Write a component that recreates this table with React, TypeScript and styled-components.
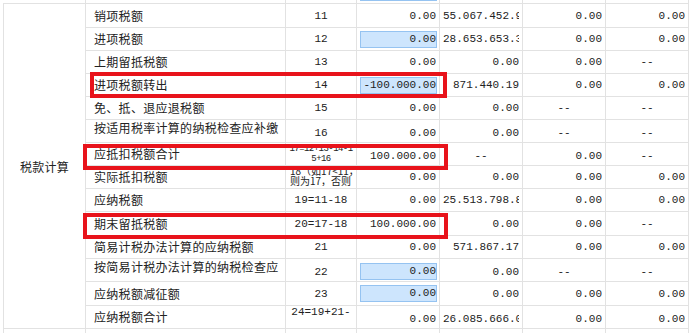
import React from 'react';
import styled, { createGlobalStyle } from 'styled-components';

type Value = string | { box: string };

interface Row {
  label: string;
  no: React.ReactNode;
  vals: Value[];
  wrap?: boolean;
  low?: boolean;
  topNo?: boolean;
}

const GlobalStyle = createGlobalStyle`
  html, body {
    margin: 0;
    padding: 0;
    background: #fff;
  }
  body {
    overflow: hidden;
    color: #222;
    font-family: "Noto Sans CJK SC", "Noto Sans", sans-serif;
  }
`;

const LINE = '#e2e2e2';
const NUM_FONT = '"Liberation Mono", "DejaVu Sans Mono", "Noto Sans CJK SC", monospace';

const Page = styled.div`
  position: relative;
  width: 692px;
  height: 333px;
  overflow: hidden;
`;

const Table = styled.div`
  display: grid;
  grid-template-columns: 83px 200px 71px 83px 83px 83px 83px;
  grid-template-rows: 24px 24px 23px 23px 23px 23px 23px 23px 23px 23px 24px 23px 23px 24px 23px 24px;
  margin: -20px 0 0 3px;
`;

const Cell = styled.div<{ $low?: boolean }>`
  box-sizing: border-box;
  border-right: 1px solid ${LINE};
  border-bottom: 1px solid ${LINE};
  display: flex;
  align-items: center;
  overflow: hidden;
  min-width: 0;
  padding-top: ${(p) => (p.$low ? '3px' : '0')};
`;

const GroupCell = styled(Cell)<{ $span: number; $edge?: boolean }>`
  grid-row: span ${(p) => p.$span};
  border-left: ${(p) => (p.$edge ? `1px solid ${LINE}` : 'none')};
  justify-content: center;
  font-size: 12px;
  letter-spacing: 0.3px;
`;

const LabelCell = styled(Cell)<{ $wrap?: boolean }>`
  align-items: ${(p) => (p.$wrap ? 'flex-start' : 'center')};
  padding: 0 4px 0 8px;
  font-size: 12px;
  letter-spacing: 0.3px;
`;

const LabelText = styled.div<{ $wrap?: boolean }>`
  line-height: ${(p) => (p.$wrap ? '15px' : '16px')};
  max-height: ${(p) => (p.$wrap ? '15px' : 'none')};
  overflow: hidden;
`;

const NoCell = styled(Cell)<{ $top?: boolean }>`
  align-items: ${(p) => (p.$top ? 'flex-start' : 'center')};
  justify-content: center;
  font-family: ${NUM_FONT};
  font-size: 11px;
  padding-left: 3px;
  padding-right: 3px;
`;

const ValueCell = styled(Cell)`
  padding-left: 3px;
  padding-right: 3px;
  font-family: ${NUM_FONT};
  font-size: 11px;
`;

const BoxCell = styled(Cell)<{ $tail?: boolean }>`
  padding-left: 3px;
  padding-right: 2px;
  align-items: ${(p) => (p.$tail ? 'flex-end' : 'center')};
  padding-bottom: ${(p) => (p.$tail ? '2px' : '0')};
  font-family: ${NUM_FONT};
  font-size: 11px;
`;

const Num = styled.div<{ $center?: boolean }>`
  flex: 1;
  min-width: 0;
  overflow: hidden;
  white-space: nowrap;
  text-align: ${(p) => (p.$center ? 'center' : 'right')};
`;

const Input = styled.div`
  flex: 1;
  box-sizing: border-box;
  height: 17px;
  line-height: 15px;
  background: #cde5fd;
  border: 1px solid #95c3f1;
  text-align: right;
  white-space: nowrap;
  overflow: hidden;
`;

const SmallFormula = styled.div`
  width: 100%;
  text-align: center;
  font-size: 9px;
  letter-spacing: -0.55px;
  line-height: 10px;
  white-space: nowrap;
`;

const NoteFormula = styled.div`
  width: 100%;
  max-height: 20px;
  font-family: "Noto Sans CJK SC", sans-serif;
  font-size: 10px;
  line-height: 10px;
  white-space: nowrap;
  overflow: hidden;
  text-align: left;
  padding-left: 1px;
`;

const TopFormula = styled.div`
  width: 100%;
  max-height: 12px;
  overflow: hidden;
  text-align: center;
  line-height: 12px;
  white-space: nowrap;
`;

const Mark = styled.div<{ $x: number; $y: number; $w: number; $h: number }>`
  position: absolute;
  left: ${(p) => p.$x}px;
  top: ${(p) => p.$y}px;
  width: ${(p) => p.$w}px;
  height: ${(p) => p.$h}px;
  box-sizing: border-box;
  border: 4px solid #e8131b;
  pointer-events: none;
`;

const rows: Row[] = [
  { label: '销项税额', no: '11', vals: ['0.00', '55.067.452.96', '0.00', '0.00'] },
  { label: '进项税额', no: '12', vals: [{ box: '0.00' }, '28.653.653.31', '0.00', '0.00'] },
  { label: '上期留抵税额', no: '13', vals: ['0.00', '0.00', '0.00', '--'] },
  { label: '进项税额转出', no: '14', vals: [{ box: '-100.000.00' }, '871.440.19', '0.00', '0.00'] },
  { label: '免、抵、退应退税额', no: '15', vals: ['0.00', '0.00', '--', '--'] },
  { label: '按适用税率计算的纳税检查应补缴税额', no: '16', wrap: true, low: true, vals: ['0.00', '0.00', '--', '--'] },
  {
    label: '应抵扣税额合计',
    no: (
      <SmallFormula>
        17=12+13-14-1
        <br />
        5+16
      </SmallFormula>
    ),
    low: true,
    vals: ['100.000.00', '--', '0.00', '--'],
  },
  {
    label: '实际抵扣税额',
    no: (
      <NoteFormula>
        18（如17&lt;11，
        <br />
        则为17，否则
        <br />
        为11）
      </NoteFormula>
    ),
    topNo: true,
    vals: ['0.00', '0.00', '0.00', '0.00'],
  },
  { label: '应纳税额', no: '19=11-18', vals: ['0.00', '25.513.798.85', '0.00', '0.00'] },
  { label: '期末留抵税额', no: '20=17-18', vals: ['100.000.00', '0.00', '0.00', '--'] },
  { label: '简易计税办法计算的应纳税额', no: '21', vals: ['0.00', '571.867.17', '0.00', '0.00'] },
  { label: '按简易计税办法计算的纳税检查应补缴税额', no: '22', wrap: true, low: true, vals: [{ box: '0.00' }, '0.00', '--', '--'] },
  { label: '应纳税额减征额', no: '23', vals: [{ box: '0.00' }, '0.00', '0.00', '0.00'] },
  {
    label: '应纳税额合计',
    no: (
      <TopFormula>
        24=19+21-
        <br />
        23
      </TopFormula>
    ),
    topNo: true,
    low: true,
    vals: ['0.00', '26.085.666.02', '0.00', '0.00'],
  },
];

const renderValue = (v: Value, key: number, low?: boolean) => {
  if (typeof v !== 'string') {
    return (
      <BoxCell key={key} $low={low}>
        <Input>{v.box}</Input>
      </BoxCell>
    );
  }
  return (
    <ValueCell key={key} $low={low}>
      <Num $center={v === '--'}>{v}</Num>
    </ValueCell>
  );
};

const App: React.FC = () => {
  return (
    <Page>
      <GlobalStyle />
      <Table>
        {/* previous row, only its bottom edge shows */}
        <GroupCell $span={1} />
        <LabelCell />
        <NoCell />
        <BoxCell $tail>
          <Input />
        </BoxCell>
        <ValueCell />
        <ValueCell />
        <ValueCell />

        <GroupCell $span={rows.length} $edge>
          税款计算
        </GroupCell>
        {rows.map((r) => (
          <React.Fragment key={r.label}>
            <LabelCell $wrap={r.wrap}>
              <LabelText $wrap={r.wrap}>{r.label}</LabelText>
            </LabelCell>
            <NoCell $low={r.low && !r.topNo && typeof r.no === 'string'} $top={r.topNo}>
              {r.no}
            </NoCell>
            {r.vals.map((v, i) => renderValue(v, i, r.low))}
          </React.Fragment>
        ))}

        {/* next row, cut by the window */}
        <GroupCell $span={1} $edge />
        <LabelCell />
        <NoCell />
        <ValueCell />
        <ValueCell />
        <ValueCell />
        <ValueCell />
      </Table>

      <Mark $x={90} $y={72} $w={357} $h={26} />
      <Mark $x={83} $y={144} $w={365} $h={26} />
      <Mark $x={83} $y={213} $w={365} $h={26} />
    </Page>
  );
};

export default App;
